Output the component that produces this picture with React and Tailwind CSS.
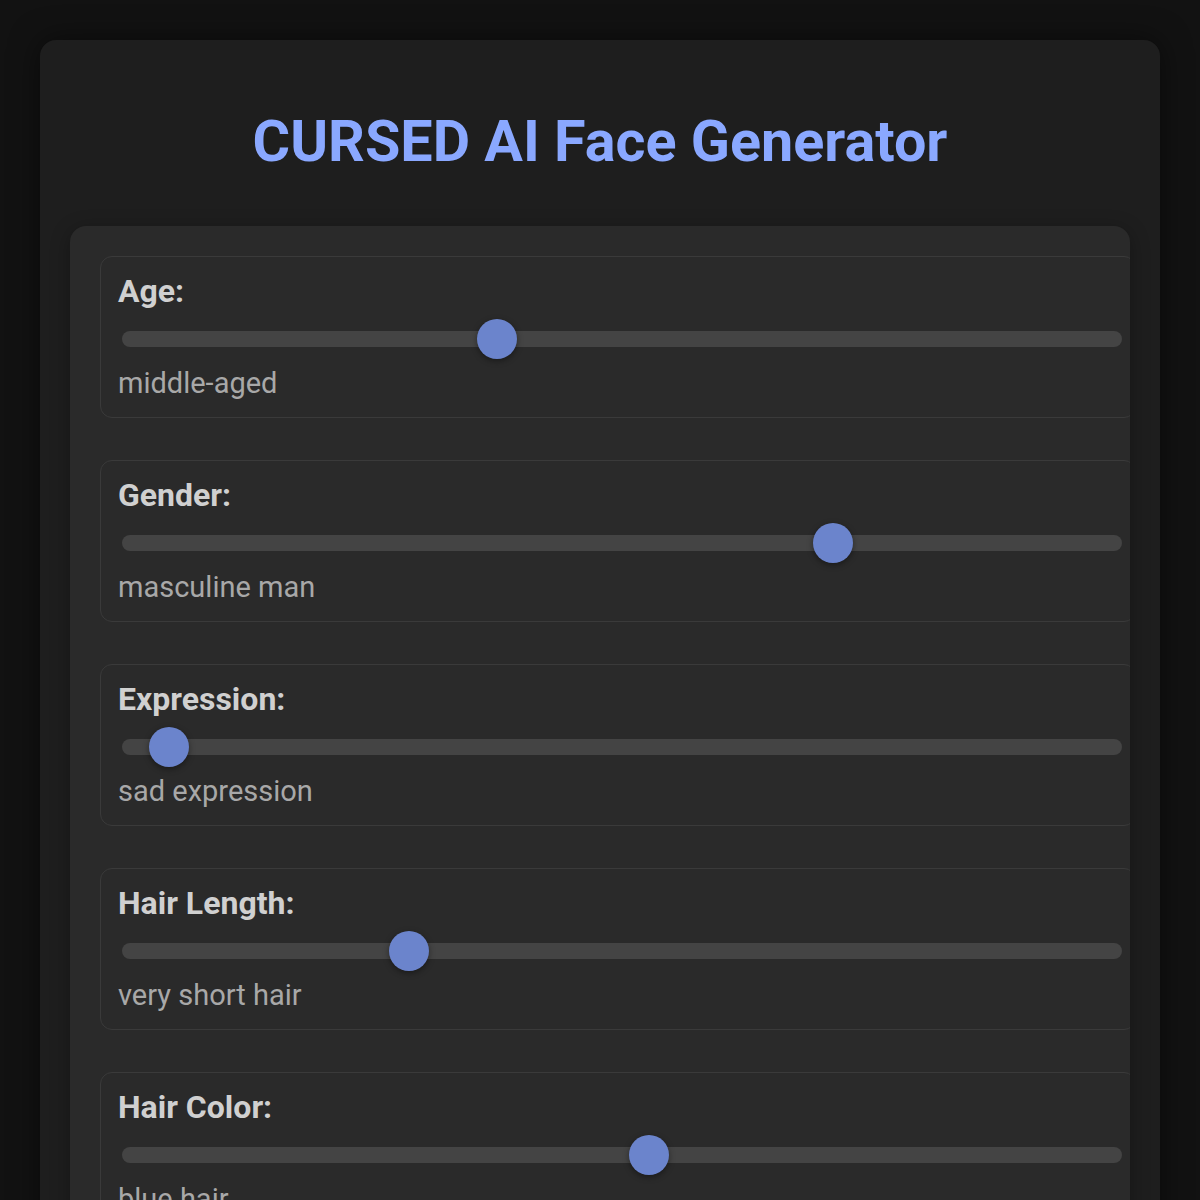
import { useState } from 'react'

const sliders = [
  { label: 'Age:', value: 0.37, text: 'middle-aged' },
  { label: 'Gender:', value: 0.72, text: 'masculine man' },
  { label: 'Expression:', value: 0.028, text: 'sad expression' },
  { label: 'Hair Length:', value: 0.278, text: 'very short hair' },
  { label: 'Hair Color:', value: 0.528, text: 'blue hair' },
  { label: 'Skin Tone:', value: 0.5, text: 'medium skin' },
]

function Slider({ label, value, text }) {
  return (
    <div className="box-content w-full rounded-xl border border-[#3a3a3a] bg-[#2a2a2a] px-[17px] pt-[15px] pb-[17px] mb-[42px]">
      <p className="text-[32px] font-bold leading-[38px] text-[#d0d0d0]">{label}</p>
      <div className="relative ml-[4px] mt-[21px] h-4 w-[1000px] rounded-full bg-[#444444]">
        <div
          className="absolute top-1/2 h-10 w-10 -translate-y-1/2 rounded-full bg-[#6b84cc] shadow-[0_2px_6px_rgba(0,0,0,0.4)]"
          style={{ left: `${value * 960}px` }}
        />
      </div>
      <p className="mt-[19px] text-[29px] leading-[34px] text-[#a8a8a8]">{text}</p>
    </div>
  )
}

export default function App() {
  const [items] = useState(sliders)

  return (
    <div className="min-h-screen bg-[#121212] p-10 font-['Roboto',sans-serif]">
      <div className="rounded-2xl bg-[#1e1e1e] p-[30px] shadow-[0_0_30px_rgba(0,0,0,0.5)]">
        <h1 className="mt-[38px] mb-[50px] text-center text-[57.5px] font-bold leading-[68px] text-[#8aa8ff]">
          CURSED AI Face Generator
        </h1>
        <div className="overflow-hidden rounded-2xl bg-[#2a2a2a] p-[30px] shadow-[0_4px_20px_rgba(0,0,0,0.3)]">
          {items.map(s => (
            <Slider key={s.label} {...s} />
          ))}
        </div>
      </div>
    </div>
  )
}
